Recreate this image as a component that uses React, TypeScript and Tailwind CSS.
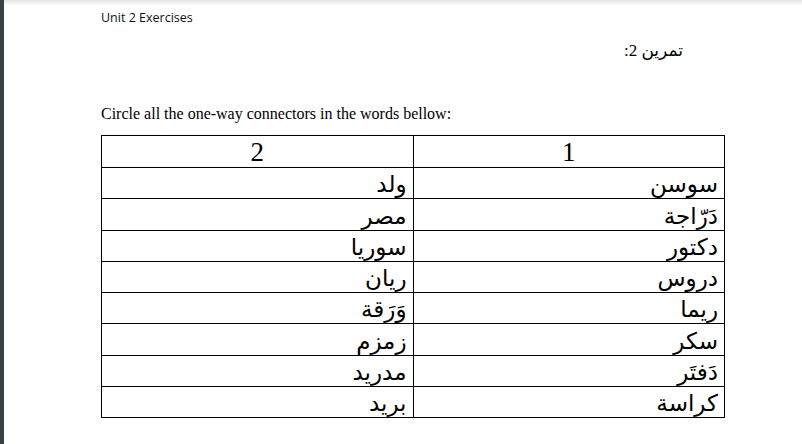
import React from 'react';

const rows: [string, string][] = [
  ['ولد', 'سوسن'],
  ['مصر', 'دَرّاجة'],
  ['سوريا', 'دكتور'],
  ['ريان', 'دروس'],
  ['وَرَقة', 'ريما'],
  ['زمزم', 'سكر'],
  ['مدريد', 'دَفتَر'],
  ['بريد', 'كراسة'],
];

export default function App() {
  return (
    <div className="flex w-[802px] h-[444px] bg-white overflow-hidden">
      {/* viewer gutter */}
      <div className="w-[4px] shrink-0 bg-[#3d4043]" />

      <div className="flex-1 flex flex-col">
        <div className="h-[6px] bg-gradient-to-b from-[#e4e4e4] to-white" />

        <div className="pl-[97px] pr-[74px]">
          <p className="mt-[4px] text-[12.5px] leading-[16px] text-[#111] font-['Open_Sans',sans-serif]">
            Unit 2 Exercises
          </p>

          <p
            dir="rtl"
            className="mt-[15px] pr-[45px] text-[17px] leading-[20px] text-black font-['Liberation_Serif','DejaVu_Sans',serif]"
          >
            تمرين 2:
          </p>

          <p className="mt-[43px] text-[16px] leading-[20px] text-black font-['Liberation_Serif',serif]">
            Circle all the one-way connectors in the words bellow:
          </p>

          <table className="mt-[11px] w-[624px] border-collapse table-fixed">
            <tbody>
              <tr>
                <td className="h-[32px] border border-black text-center text-[27px] leading-[30px] font-['Liberation_Serif',serif]">
                  2
                </td>
                <td className="h-[32px] border border-black text-center text-[27px] leading-[30px] font-['Liberation_Serif',serif]">
                  1
                </td>
              </tr>
              {rows.map(([a, b], i) => (
                <tr key={i}>
                  <td
                    dir="rtl"
                    className="h-[31.25px] border border-black px-[6px] align-bottom text-[23px] leading-[28px] font-['DejaVu_Sans',sans-serif]"
                  >
                    {a}
                  </td>
                  <td
                    dir="rtl"
                    className="h-[31.25px] border border-black px-[6px] align-bottom text-[23px] leading-[28px] font-['DejaVu_Sans',sans-serif]"
                  >
                    {b}
                  </td>
                </tr>
              ))}
            </tbody>
          </table>
        </div>
      </div>
    </div>
  );
}
